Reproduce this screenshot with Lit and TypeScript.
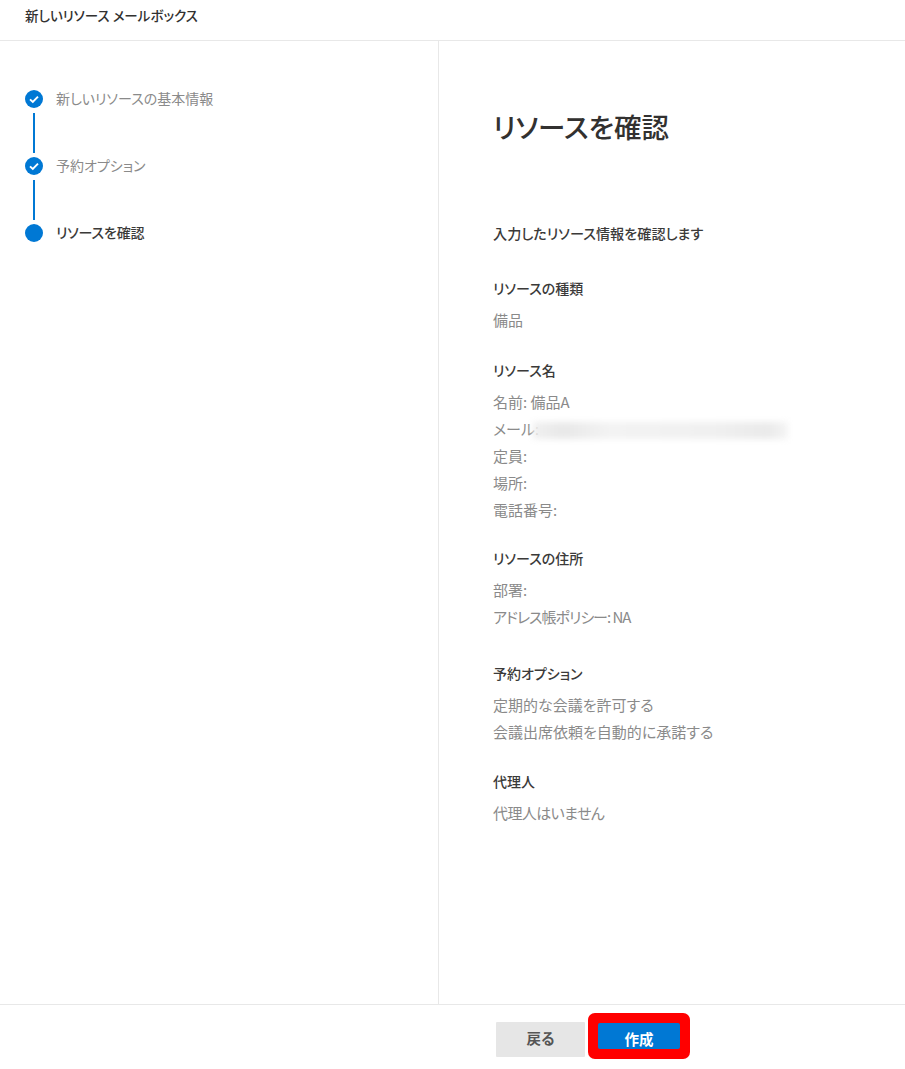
import { LitElement, html, css } from "lit";
import { customElement } from "lit/decorators.js";

const check = html`<svg viewBox="0 0 18 18" width="18" height="18" aria-hidden="true"><circle cx="9" cy="9" r="9" fill="#0078d4"/><path d="M5 9.4 L7.8 12 L13 6.6" fill="none" stroke="#fff" stroke-width="1.9"/></svg>`;
const dot = html`<svg viewBox="0 0 18 18" width="18" height="18" aria-hidden="true"><circle cx="9" cy="9" r="9" fill="#0078d4"/></svg>`;

@customElement("app-root")
export class AppRoot extends LitElement {
  static styles = css`
    :host {
      display: flex;
      flex-direction: column;
      width: 905px;
      height: 1069px;
      background: #fff;
      color: #8a8a8a;
      font-family: "Noto Sans CJK JP", "Noto Sans", sans-serif;
      font-size: 15px;
      font-feature-settings: "palt";
      overflow: hidden;
    }
    .head {
      height: 41px;
      box-sizing: border-box;
      border-bottom: 1px solid #e8e8e8;
      flex: none;
      padding: 5px 0 0 25px;
      font-size: 13.5px;
      line-height: 21px;
      font-weight: 500;
      color: #323130;
    }
    .main { flex: 1; display: flex; min-height: 0; }
    .side {
      width: 439px;
      box-sizing: border-box;
      border-right: 1px solid #e8e8e8;
      padding: 48px 0 0 25px;
      flex: none;
      font-size: 14px;
    }
    .step { display: flex; align-items: center; gap: 13px; height: 20px; line-height: 20px; }
    .step span { margin-top: -2px; }
    .step svg { flex: none; display: block; }
    .step.now { color: #3b3a39; font-weight: 500; }
    .step.now span { letter-spacing: -0.2px; }
    .line { width: 2px; height: 40px; margin: 4px 0 3px 8px; background: #0078d4; }
    .content { flex: 1; padding: 61px 0 0 54px; min-width: 0; }
    h1 {
      margin: 0;
      font-size: 27.5px;
      line-height: 48px;
      font-weight: 500;
      color: #323130;
    }
    .lead { margin: 71px 0 0; font-size: 14.15px; line-height: 24px; font-weight: 500; color: #3b3a39; }
    .sec { margin-top: 25px; }
    .lead + .sec { margin-top: 31px; }
    .sec.addr { margin-top: 23px; }
    .sec.wide { margin-top: 31px; }
    .sec.tight { margin-top: 24px; }
    h2 { margin: 0 0 6px; font-size: 14px; line-height: 24px; font-weight: 500; color: #3b3a39; }
    .row { line-height: 27px; height: 27px; white-space: nowrap; position: relative; }
    .row.kana { letter-spacing: -1px; }
    .row.kana2 { letter-spacing: -0.6px; }
    .blur {
      position: absolute;
      left: 40px;
      top: 7px;
      width: 255px;
      height: 17px;
      background: linear-gradient(90deg, #f0f0f0, #e8e8e8 12%, #f3f3f3 30%, #f0f0f0 70%, #eaeaea 92%, #f5f5f5);
      filter: blur(3px);
    }
    .foot {
      flex: none;
      height: 65px;
      box-sizing: border-box;
      border-top: 1px solid #e8e8e8;
      display: flex;
      align-items: flex-start;
      padding: 17px 0 0 496px;
    }
    button {
      font: inherit;
      font-weight: 700;
      font-size: 14.5px;
      border: 0;
      border-radius: 1px;
      height: 35px;
      line-height: 20px;
      box-sizing: border-box;
    }
    .back { width: 89px; padding: 0 0 3px; background: #e6e6e6; color: #555; }
    .go {
      width: 82px;
      height: 26px;
      padding: 5px 0 0;
      margin: 1px 0 0 13px;
      background: #0078d4;
      color: #fff;
      border-radius: 2px;
      box-shadow: 0 0 0 10px #f00;
    }
  `;

  render() {
    return html`
      <div class="head">新しいリソース メールボックス</div>
      <div class="main">
        <nav class="side">
          <div class="step">${check}<span>新しいリソースの基本情報</span></div>
          <div class="line"></div>
          <div class="step">${check}<span>予約オプション</span></div>
          <div class="line"></div>
          <div class="step now">${dot}<span>リソースを確認</span></div>
        </nav>
        <section class="content">
          <h1>リソースを確認</h1>
          <p class="lead">入力したリソース情報を確認します</p>
          <div class="sec"><h2>リソースの種類</h2><div class="row">備品</div></div>
          <div class="sec">
            <h2>リソース名</h2>
            <div class="row">名前: 備品A</div>
            <div class="row">メール:<span class="blur"></span></div>
            <div class="row">定員:</div>
            <div class="row">場所:</div>
            <div class="row">電話番号:</div>
          </div>
          <div class="sec addr">
            <h2>リソースの住所</h2>
            <div class="row">部署:</div>
            <div class="row kana">アドレス帳ポリシー: NA</div>
          </div>
          <div class="sec wide">
            <h2>予約オプション</h2>
            <div class="row">定期的な会議を許可する</div>
            <div class="row">会議出席依頼を自動的に承諾する</div>
          </div>
          <div class="sec tight"><h2>代理人</h2><div class="row kana2">代理人はいません</div></div>
        </section>
      </div>
      <div class="foot">
        <button class="back">戻る</button>
        <button class="go">作成</button>
      </div>
    `;
  }
}
